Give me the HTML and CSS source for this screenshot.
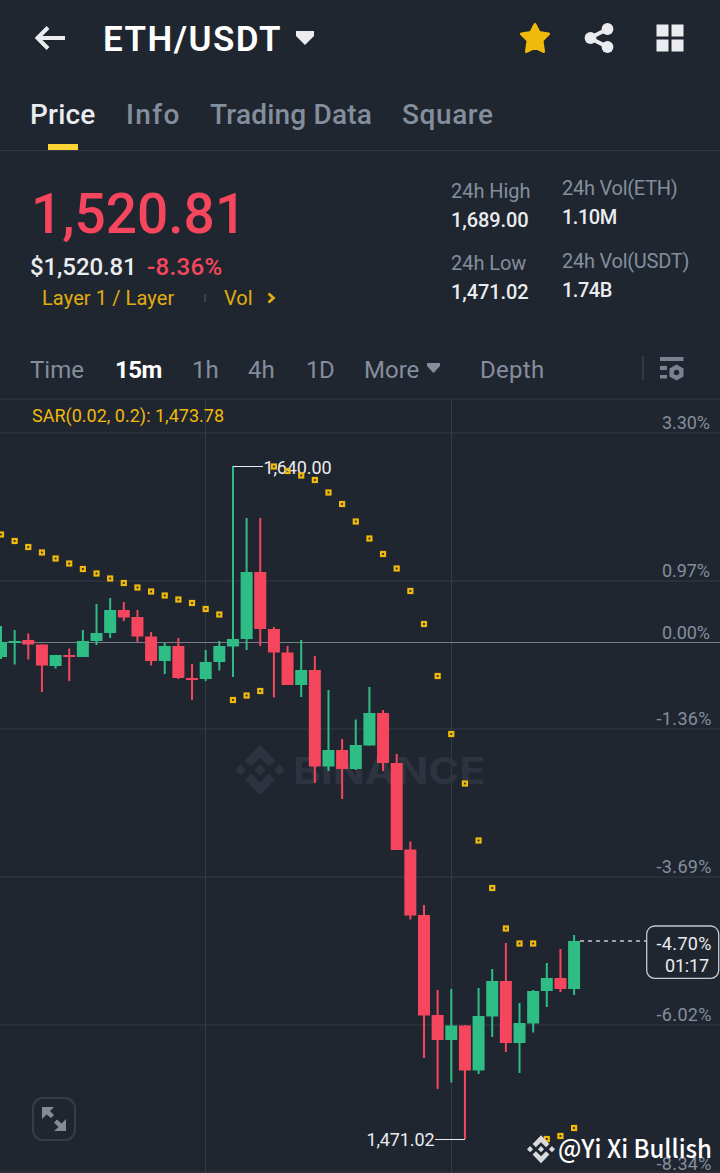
FILE: index.html
```html
<!DOCTYPE html>
<html lang="en">
<head>
<meta charset="utf-8">
<title>ETH/USDT</title>
<link rel="stylesheet" href="styles.css">
</head>
<body>
<main class="screen">
  <header class="topbar">
    <svg class="back" width="32" height="26" viewBox="0 0 32 26"><path d="M31 13H4M14 2.500L3.500 13L14 23.500" fill="none" stroke="#eaecef" stroke-width="4"/></svg>
    <h1 class="pair">ETH/USDT</h1>
    <svg class="caret" width="18" height="14" viewBox="0 0 18 14"><path d="M0 0H18V5L9 14L0 5Z" fill="#eaecef"/></svg>
    <svg class="star" width="30" height="30" viewBox="0 0 30 30"><path d="M15 1.500L19 9.500L28.500 11L22 17.500L23.500 28.500L15 24.500L6.500 28.500L8 17.500L1.500 11L11 9.500Z" fill="#f0b90b" stroke="#f0b90b" stroke-width="3" stroke-linejoin="round"/></svg>
    <svg class="share" width="30" height="30" viewBox="0 0 30 30"><path d="M23.500 6L6 15L23.500 24" fill="none" stroke="#eaecef" stroke-width="4"/><g fill="#eaecef"><circle cx="23.500" cy="6" r="5.900"/><circle cx="6.500" cy="15" r="5.900"/><circle cx="23.500" cy="24" r="5.900"/></g></svg>
    <svg class="grid" width="28" height="28" viewBox="0 0 28 28"><path d="M.5 .5h12v12H.500zM15.500 .5h12v12h-12zM.5 15.500h12v12H.500zM15.500 15.500h12v12h-12z" fill="#eaecef"/></svg>
  </header>
  <nav class="tabs">
    <span class="tab tab-price active">Price</span>
    <span class="tab tab-info">Info</span>
    <span class="tab tab-data">Trading Data</span>
    <span class="tab tab-square">Square</span>
  </nav>
  <section class="summary">
    <div class="quote">
      <div class="last">1,520.81</div>
      <div class="fiat"><span class="usd">$1,520.81</span><span class="change">-8.36%</span></div>
      <div class="tags"><span class="tag-layer">Layer 1 / Layer</span><i class="tick"></i><span class="tag-vol">Vol</span><svg width="9" height="12" viewBox="0 0 9 12"><path d="M1.500 1.500L6.500 6L1.500 10.500" fill="none" stroke="#e0ae0d" stroke-width="2.800"/></svg></div>
    </div>
    <dl class="stats">
      <dt class="s-high">24h High</dt><dd>1,689.00</dd>
      <dt class="s-low">24h Low</dt><dd>1,471.02</dd>
    </dl>
    <dl class="stats volume">
      <dt class="s-eth">24h Vol(ETH)</dt><dd>1.10M</dd>
      <dt class="s-usdt">24h Vol(USDT)</dt><dd>1.74B</dd>
    </dl>
  </section>
  <nav class="intervals">
    <span class="iv-time">Time</span>
    <span class="iv-15 on">15m</span>
    <span class="iv-1h">1h</span>
    <span class="iv-4h">4h</span>
    <span class="iv-1d">1D</span>
    <span class="iv-more">More</span>
    <svg class="more-caret" width="13" height="10" viewBox="0 0 13 10"><path d="M0 0H13V3L6.500 10L0 3Z" fill="#848e9c"/></svg>
    <span class="iv-depth">Depth</span>
    <i class="divider"></i>
    <svg class="settings" width="24" height="25" viewBox="0 0 24 25"><path d="M0 1H23.500V5H0zM0 10H7V14H0zM0 19H7V22.500H0z" fill="#7b8391"/><path d="M16.500 8.500L23.500 12.500V20.500L16.500 24.500L9.500 20.500V12.500Z" fill="#7b8391"/><circle cx="16.500" cy="16.500" r="2.800" fill="#202630"/></svg>
  </nav>
  <section class="chart">
    <svg width="720" height="775" viewBox="0 398 720 775">
      <path class="gridline-h" d="M0 399H720M0 433H720M0 581H720M0 729H720M0 877H720M0 1025H720M0 1172.500H720"/>
      <path class="gridline-v" d="M205.500 400V1173M451.500 400V1173"/>
      <g class="brand">
        <path id="mark" d="M260 745l15 15.500-6 6-9-9-9 9-6-6zM260 795l15-15.500-6-6-9 9-9-9-6 6zM260 764.500l5.500 5.500-5.500 5.500-5.500-5.500zM240.500 764.500l5.500 5.500-5.500 5.500-5.500-5.500zM279.500 764.500l5.500 5.500-5.500 5.500-5.500-5.500z"/>
        <text class="brand-name" x="293" y="784" textLength="192" lengthAdjust="spacingAndGlyphs">BINANCE</text>
      </g>
      <path class="zero" d="M0 642.500H720"/>
      <g id="candles"></g>
      <path class="lead" d="M233 466.500H263M435 1139.500H465"/>
      <g class="axis bright">
        <text x="263.500" y="474" textLength="68">1,640.00</text>
        <text x="366.500" y="1146" textLength="68">1,471.02</text>
      </g>
      <text class="sar-label" x="32" y="422" textLength="192">SAR(0.02, 0.2): 1,473.78</text>
      <g id="sar"></g>
      <g class="axis">
        <text x="662" y="429" textLength="48">3.30%</text>
        <text x="662" y="577" textLength="48">0.97%</text>
        <text x="662" y="639" textLength="48">0.00%</text>
        <text x="656.500" y="725" textLength="55">-1.36%</text>
        <text x="656.500" y="873" textLength="55">-3.69%</text>
        <text x="656.500" y="1021" textLength="55">-6.02%</text>
        <text x="656.500" y="1170" textLength="55">-8.34%</text>
      </g>
      <path class="last-line" d="M580 941H646"/>
      <rect class="last-box" x="646.700" y="926" width="72" height="52.300" rx="8"/>
      <g class="axis bright">
        <text x="656.500" y="950" textLength="55">-4.70%</text>
        <text x="665" y="972" textLength="44">01:17</text>
      </g>
      <rect class="expand-box" x="33" y="1098" width="42" height="42" rx="10"/>
      <path class="expand" d="M42 1107H54L50 1111L54 1115L51 1118L46.500 1114.500L42 1119ZM66 1131H54L58.500 1127L54 1122.500L57 1119.500L61.500 1123.500L66 1119Z"/>
      <g class="credit">
        <use href="#mark" transform="translate(395.400 718) scale(.56)"/>
        <text x="558" y="1158" textLength="154" lengthAdjust="spacingAndGlyphs">@Yi Xi Bullish</text>
      </g>
    </svg>
  </section>
</main>
<script src="chart.js"></script>
</body>
</html>
```
FILE: styles.css
```css
* { box-sizing: border-box; }
body { margin: 0; background: #202630; color: #eaecef; font-family: Roboto, "Liberation Sans", sans-serif; }
.screen { width: 720px; height: 1173px; overflow: hidden; }
svg { display: block; flex: none; }
span, dt, dd, .last, .pair { white-space: nowrap; }

.topbar { display: flex; align-items: center; height: 76px; padding-left: 34px; }
.pair { margin: 4px 0 0 37px; width: 194px; font: 600 35px/44px Roboto, sans-serif; color: #fff; letter-spacing: 1.45px; }
.caret { margin-left: -1px; }
.star { margin-left: 206px; }
.share { margin-left: 34px; }
.grid { margin-left: 42px; }

.tabs { display: flex; height: 75px; padding-left: 30px; border-bottom: 1px solid #343a45; }
.tab { position: relative; font-size: 28px; line-height: 77px; font-weight: 500; color: #848e9c; }
.tab-price { width: 96px; letter-spacing: .2px; }
.tab-info { width: 84px; letter-spacing: 1.4px; }
.tab-data { width: 192px; letter-spacing: .2px; }
.tab-square { letter-spacing: .6px; }
.tab.active { color: #eaecef; }
.tab.active::after { content: ""; position: absolute; left: 18px; bottom: 0; width: 30px; height: 6px; background: #fcd535; }

.summary { display: flex; height: 189px; }
.quote { width: 451px; padding: 32px 0 0 30px; }
.last { height: 60px; padding-left: 1px; font-size: 55px; line-height: 62px; font-weight: 500; color: #f6465d; }
.fiat { display: flex; height: 46px; line-height: 48px; font-size: 24px; font-weight: 500; letter-spacing: -.1px; }
.usd { width: 117px; }
.change { color: #f6465d; letter-spacing: .35px; }
.tags { display: flex; align-items: center; height: 18px; padding-left: 12px; font-size: 20px; color: #e0ae0d; }
.tag-layer { width: 162px; letter-spacing: .1px; }
.tick { width: 2px; height: 8px; background: #3a414c; }
.tag-vol { width: 43px; margin-left: 18px; }
.stats { width: 111px; margin: 26px 0 0; font-size: 20px; line-height: 28px; }
.volume { width: 150px; margin-top: 23px; }
.stats dt { color: #848e9c; letter-spacing: -.05px; }
.volume dt { letter-spacing: -.25px; }
.stats dd { height: 28px; margin: 0 0 16px; padding-top: 1px; font-weight: 500; font-size: 20px; letter-spacing: -.1px; }
.volume dd { margin-bottom: 17px; letter-spacing: -.5px; }

.intervals { display: flex; align-items: center; height: 58px; padding: 2px 0 0 30px; font-size: 24px; color: #848e9c; }
.iv-time { width: 85px; }
.iv-15 { width: 77px; letter-spacing: -.5px; }
.iv-1h { width: 56px; }
.iv-4h { width: 58px; }
.iv-1d { width: 58px; letter-spacing: -.4px; }
.iv-more { width: 63px; }
.more-caret { margin-bottom: 5px; }
.iv-depth { width: 162px; margin-left: 40px; letter-spacing: .3px; }
.on { color: #fff; font-weight: 700; }
.divider { width: 2px; height: 24px; margin: 0 16px 4px 0; background: #343a45; }
.settings { margin-bottom: 3px; }

.gridline-h { stroke: #2a303b; stroke-width: 2; }
.gridline-v { stroke: #343a45; }
.zero { stroke: #777e89; }
.brand { fill: #2e343f; }
.brand-name { font: 700 37px Inter, sans-serif; }
.up { fill: #2ebd85; }
.down { fill: #f6465d; }
.sar { fill: none; stroke: #f0b90b; stroke-width: 2.200; }
.sar-label { font-size: 18px; fill: #f0b90b; }
.axis { font-size: 18px; fill: #848e9c; }
.axis.bright { fill: #eaecef; }
.lead { stroke: #eaecef; stroke-width: 1.200; }
.last-line { stroke: #c5c8cd; stroke-width: 1.300; stroke-dasharray: 4 4; }
.last-box { fill: #202630; stroke: #c5c8cd; stroke-width: 1.300; }
.expand-box { fill: none; stroke: #373d48; stroke-width: 2; }
.expand { fill: #848b97; }
.credit { fill: #d8dade; }
.credit text { font: 500 25px "Noto Sans CJK SC", sans-serif; fill: #fff; }
```
FILE: chart.js
```js
// Each candle: direction, wick top, body top, body bottom, wick bottom, SAR position.
const candles = [
  ["up",626,642,657,659,534.5],["up",630,641,643,664.5,541],["down",633.5,640,644.5,659.5,547],
  ["down",644.5,644.5,665.5,692,552.5],["up",655,655,666,668.5,558.5],["down",648.5,655,657,681,563.5],
  ["up",630,641,657,657,569],["up",604,633,641,645,573.5],["up",598,610,633,638,578.5],
  ["down",602,610,617.5,621,583],["down",610,617,636.5,642,587.5],["down",632,636.5,661,665.5,591.5],
  ["up",643,646,661,674,595.5],["down",638,646,678,679,599.5],["down",664,678,680,700,603],
  ["up",650,662,679,681,609],["up",641,646,662,670.5,614.5],["up",466,639,646.5,677,700],
  ["up",518,572,639,650,695.5],["down",518,572,629,646,691],["down",627,629,652.5,697.5,466.5],
  ["down",646,652.5,685,685,471],["up",640,670,685,697,475.5],["down",656,670,766.5,783,480],
  ["up",690,750,766.5,771,492.5],["down",739,750,769,799,504],["up",719.5,745,769,770,521.5],
  ["up",687,713,745.5,745.5,538.5],["down",710,713,763,771,554],["down",754,763,850,850,568.5],
  ["down",841.5,849.5,915.5,919.5,591],["down",905,915,1015.5,1058,624],["down",990,1015,1040,1089,676],
  ["up",989,1025.5,1040,1082.5,734],["down",1025,1025.5,1070.5,1139,783.5],["up",988,1016,1070.5,1074,840.5],
  ["up",969,981,1016.5,1037,888],["down",943,981,1043,1052,928.5],["up",1003,1023,1043,1073,943.5],
  ["up",990,991,1023.5,1032.5,943.5],["up",963,978,991,1007,1139],["down",949,978,989,992,1136],
  ["up",935,941,989,995,1128]
];
const ns = "http://www.w3.org/2000/svg";
const rect = (parent, cls, x, y, w, h) => {
  const r = document.createElementNS(ns, "rect");
  Object.entries({ class: cls, x, y, width: w, height: h }).forEach(([k, v]) => r.setAttribute(k, v));
  document.getElementById(parent).appendChild(r);
};
candles.forEach(([dir, hi, top, bottom, lo, sar], i) => {
  const x = 1 + i * 13.645;
  rect("candles", dir, x - 1, hi, 2, lo - hi);
  rect("candles", dir, x - 6, top, 12, bottom - top);
  rect("sar", "sar", x - 2, sar - 2, 4, 4);
});
```
